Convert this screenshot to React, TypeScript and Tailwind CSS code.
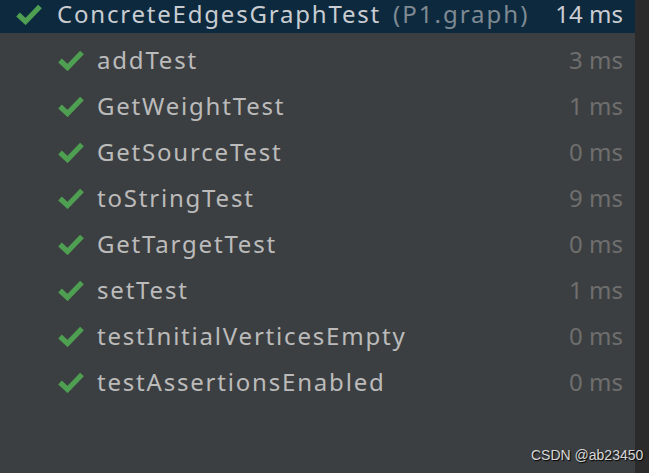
import React from "react";

const Check = ({ className }: { className?: string }) => (
  <svg viewBox="0 0 28 22" className={className} width="28" height="22">
    <path d="M3 11.5 L10.5 18.5 L25 3.5" fill="none" stroke="#4e9f51" strokeWidth="5.2" strokeLinecap="butt" strokeLinejoin="miter" />
  </svg>
);

const rows: [string, string][] = [
  ["addTest", "3 ms"],
  ["GetWeightTest", "1 ms"],
  ["GetSourceTest", "0 ms"],
  ["toStringTest", "9 ms"],
  ["GetTargetTest", "0 ms"],
  ["setTest", "1 ms"],
  ["testInitialVerticesEmpty", "0 ms"],
  ["testAssertionsEnabled", "0 ms"],
];

export default function App() {
  return (
    <div
      className="relative flex h-[473px] w-[649px] overflow-hidden bg-[#3c3f41]"
      style={{ fontFamily: '"Noto Sans", "Open Sans", sans-serif' }}
    >
      <div className="flex w-[635px] flex-col">
        <div className="flex h-[33px] items-center bg-[#0d293e] pl-[15px] pr-[12px] pb-[5px]">
          <Check className="shrink-0" />
          <div className="ml-[14px] whitespace-nowrap text-[24px] leading-none tracking-[1.8px] text-[#c9cdd1]">
            ConcreteEdgesGraphTest
          </div>
          <div className="ml-[12px] whitespace-nowrap text-[24px] leading-none tracking-[2px] text-[#7f8a93]">(P1.graph)</div>
          <div className="ml-auto whitespace-nowrap text-[24px] leading-none text-[#c9cdd1]">14 ms</div>
        </div>
        <div className="flex flex-col pt-[4px]">
          {rows.map(([name, ms]) => (
            <div key={name} className="flex h-[46px] items-center pl-[57px] pr-[12px]">
              <Check className="shrink-0" />
              <div className="ml-[12px] whitespace-nowrap text-[24px] leading-none tracking-[1.8px] text-[#bbbbbb]">{name}</div>
              <div className="ml-auto whitespace-nowrap text-[24px] leading-none text-[#6e6e6e]">{ms}</div>
            </div>
          ))}
        </div>
      </div>
      <div className="w-[14px] bg-[#2b2b2b]" />
      <div
        className="absolute left-[531px] top-[448px] whitespace-nowrap text-[14px] leading-none text-[#d8d8d8]"
        style={{ fontFamily: '"Liberation Sans", Arial, sans-serif', textShadow: "1px 1px 1px #000" }}
      >
        CSDN @ab23450
      </div>
    </div>
  );
}
